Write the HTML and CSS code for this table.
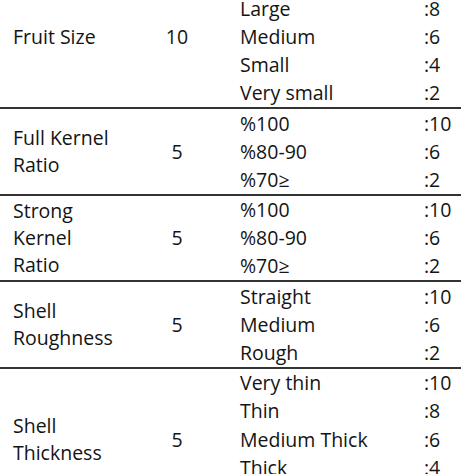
FILE: index.html
```html
<!DOCTYPE html>
<html>
<head>
<meta charset="utf-8">
<link rel="stylesheet" href="styles.css">
</head>
<body>
<div class="table">
  <div class="group">
    <div class="name">Fruit Size</div>
    <div class="score">10</div>
    <div class="opts">
      <div class="row"><span class="lbl">Very large</span><span class="val">:10</span></div>
      <div class="row"><span class="lbl">Large</span><span class="val">:8</span></div>
      <div class="row"><span class="lbl">Medium</span><span class="val">:6</span></div>
      <div class="row"><span class="lbl">Small</span><span class="val">:4</span></div>
      <div class="row"><span class="lbl">Very small</span><span class="val">:2</span></div>
    </div>
  </div>
  <div class="group">
    <div class="name">Full Kernel<br>Ratio</div>
    <div class="score">5</div>
    <div class="opts">
      <div class="row"><span class="lbl">%100</span><span class="val">:10</span></div>
      <div class="row"><span class="lbl">%80-90</span><span class="val">:6</span></div>
      <div class="row"><span class="lbl">%70≥</span><span class="val">:2</span></div>
    </div>
  </div>
  <div class="group">
    <div class="name">Strong<br>Kernel<br>Ratio</div>
    <div class="score">5</div>
    <div class="opts">
      <div class="row"><span class="lbl">%100</span><span class="val">:10</span></div>
      <div class="row"><span class="lbl">%80-90</span><span class="val">:6</span></div>
      <div class="row"><span class="lbl">%70≥</span><span class="val">:2</span></div>
    </div>
  </div>
  <div class="group">
    <div class="name">Shell<br>Roughness</div>
    <div class="score">5</div>
    <div class="opts">
      <div class="row"><span class="lbl">Straight</span><span class="val">:10</span></div>
      <div class="row"><span class="lbl">Medium</span><span class="val">:6</span></div>
      <div class="row"><span class="lbl">Rough</span><span class="val">:2</span></div>
    </div>
  </div>
  <div class="group">
    <div class="name">Shell<br>Thickness</div>
    <div class="score">5</div>
    <div class="opts">
      <div class="row"><span class="lbl">Very thin</span><span class="val">:10</span></div>
      <div class="row"><span class="lbl">Thin</span><span class="val">:8</span></div>
      <div class="row"><span class="lbl">Medium Thick</span><span class="val">:6</span></div>
      <div class="row"><span class="lbl">Thick</span><span class="val">:4</span></div>
      <div class="row"><span class="lbl">Very thick</span><span class="val">:2</span></div>
    </div>
  </div>
</div>
</body>
</html>
```

FILE: styles.css
```css
html, body {
  margin: 0;
  padding: 0;
  background: #ffffff;
  overflow: hidden;
}
body {
  font-family: "Open Sans", Lato, sans-serif;
  font-size: 19.5px;
  color: #141414;
}
.table {
  width: 461px;
  margin-top: -34px;
}
.group {
  display: flex;
  border-bottom: 2px solid #333333;
}
.name {
  width: 141px;
  padding-left: 13px;
  display: flex;
  align-items: center;
  line-height: 27px;
}
.score {
  width: 46px;
  display: flex;
  align-items: center;
  justify-content: center;
}
.opts {
  width: 261px;
  padding-left: 40px;
  box-sizing: border-box;
}
.row {
  height: 28.2px;
  display: flex;
  align-items: center;
}
.lbl {
  width: 184px;
}
.val {
  width: 37px;
}
```
